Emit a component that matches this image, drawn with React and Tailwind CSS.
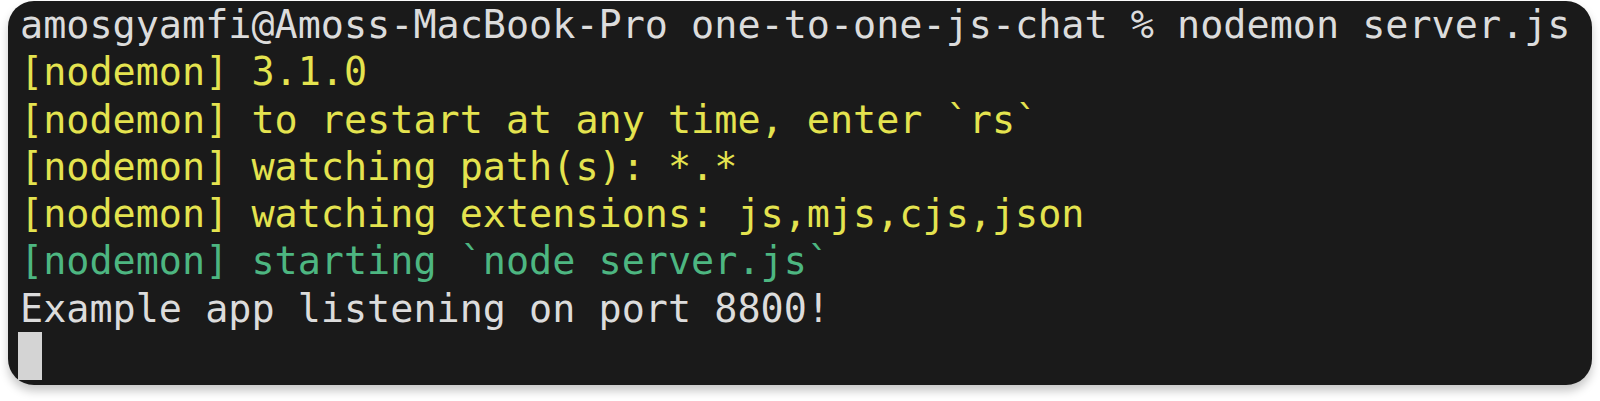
const lines = [
  {text: "amosgyamfi@Amoss-MacBook-Pro one-to-one-js-chat % nodemon server.js", color: "text-[#dcdcdc]"},
  {text: "[nodemon] 3.1.0", color: "text-[#e4e34f]"},
  {text: "[nodemon] to restart at any time, enter `rs`", color: "text-[#e4e34f]"},
  {text: "[nodemon] watching path(s): *.*", color: "text-[#e4e34f]"},
  {text: "[nodemon] watching extensions: js,mjs,cjs,json", color: "text-[#e4e34f]"},
  {text: "[nodemon] starting `node server.js`", color: "text-[#4db681]"},
  {text: "Example app listening on port 8800!", color: "text-[#dcdcdc]"},
]

export default function App() {
  return (
    <div className="w-[1600px] h-[401px] bg-white overflow-hidden pt-[1px] px-[8px]">
      <div className="h-[384px] rounded-[26px] bg-[#1a1a1a] shadow-[0_6px_10px_rgba(0,0,0,0.22)] pl-[12px] font-['DejaVu_Sans_Mono',monospace] text-[38.45px] leading-[47.3px] whitespace-pre">
        {lines.map((line, i) => (
          <div key={i} className={line.color}>
            {line.text}
          </div>
        ))}
        <div className="h-[47.3px] flex items-start">
          <div className="w-[24px] h-[48px] bg-[#d4d4d4] -ml-[2px]" />
        </div>
      </div>
    </div>
  )
}
